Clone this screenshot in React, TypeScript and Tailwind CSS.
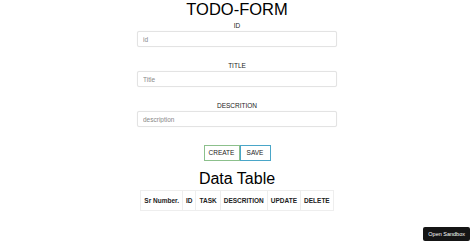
import React from 'react';

const font = { fontFamily: '"Liberation Sans", Arial, sans-serif' };

function Field({ label, placeholder }: { label: string; placeholder: string }) {
  return (
    <div className="flex flex-col items-center">
      <label className="text-[6.5px] leading-[10px] text-[#222] uppercase">{label}</label>
      <input
        placeholder={placeholder}
        className="w-[200px] h-[16px] px-[5px] text-[6.5px] text-[#333] placeholder:text-[#888] bg-white border border-[#e3e3e3] rounded-[2px] shadow-[0_0_1px_rgba(0,0,0,0.08)] outline-none"
      />
    </div>
  );
}

export default function App() {
  const heads = ['Sr Number.', 'ID', 'TASK', 'DESCRITION', 'UPDATE', 'DELETE'];
  return (
    <div className="relative w-[474px] h-[248px] bg-white text-black overflow-hidden" style={font}>
      <div className="flex flex-col items-center">
        {/* Form */}
        <h1 className="text-[16.5px] leading-[18px] font-normal">TODO-FORM</h1>
        <div className="flex flex-col gap-[14px] mt-[3px]">
          <Field label="ID" placeholder="id" />
          <Field label="TITLE" placeholder="Title" />
          <Field label="DESCRITION" placeholder="description" />
        </div>

        <div className="flex mt-[18px]">
          <button className="h-[16px] w-[36px] text-[6.5px] text-[#222] bg-white border-[1.5px] border-[#8cc08c]">
            CREATE
          </button>
          <button className="h-[16px] w-[31px] text-[6.5px] text-[#222] bg-white border-[1.5px] border-[#4aa6c8]">
            SAVE
          </button>
        </div>

        {/* Table */}
        <h2 className="text-[16px] leading-[20px] mt-[8px] font-normal">Data Table</h2>
        <table className="mt-[1px] border-collapse">
          <thead>
            <tr>
              {heads.map((h) => (
                <th
                  key={h}
                  className="h-[20px] px-[3px] text-[6.5px] font-bold text-[#222] border border-[#eeeeee]"
                >
                  {h}
                </th>
              ))}
            </tr>
          </thead>
        </table>
      </div>

      <button className="absolute right-[4px] bottom-[7px] h-[14px] px-[5px] bg-[#151515] text-white text-[5.5px] rounded-[2px]">
        Open Sandbox
      </button>
    </div>
  );
}
